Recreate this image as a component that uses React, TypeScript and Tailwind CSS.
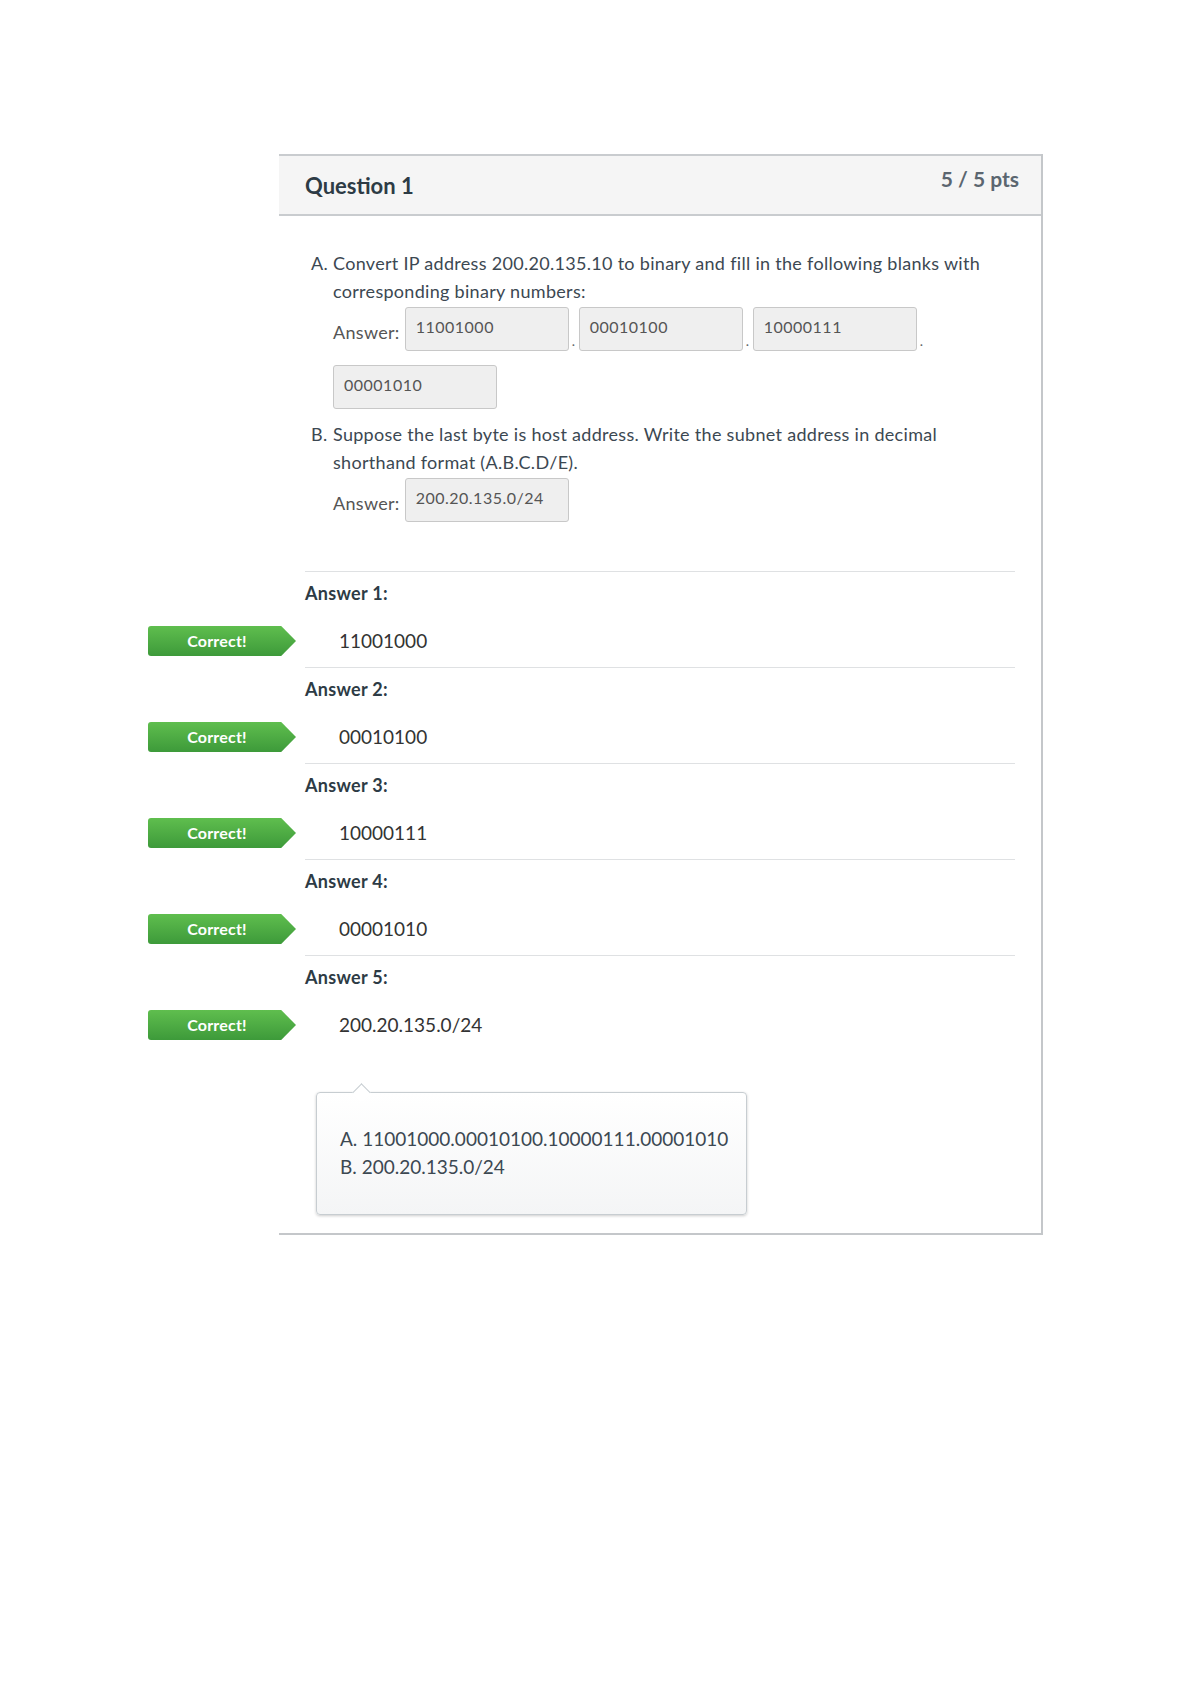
export default function App() {
  const answers = ["11001000", "00010100", "10000111", "00001010", "200.20.135.0/24"];

  return (
    <div className="min-h-[1698px] bg-white pt-[154px] pl-[279px] font-['Lato','Liberation_Sans',sans-serif] text-[#2d3b45]">
      <div className="w-[764px] border-r-2 border-b-2 border-[#c4c7ca]">
        {/* Header */}
        <div className="h-[62px] bg-[#f5f5f5] border-t-2 border-b-2 border-[#c9cccf] flex justify-between pl-[26px] pr-[22px]">
          <h2 className="text-[22px] font-bold leading-none pt-[19px] text-[#2d3b45]">Question 1</h2>
          <div className="text-[21px] font-bold leading-none pt-[12px] text-[#5b6670]">5 / 5 pts</div>
        </div>

        {/* Question text */}
        <div className="pl-[32px] pr-[20px] pt-[33px] text-[18px] leading-[28px] tracking-[0.3px] text-[#3c4852]">
          <div className="flex">
            <span className="w-[22px] shrink-0">A.</span>
            <div>
              <p>Convert IP address 200.20.135.10 to binary and fill in the following blanks with</p>
              <p>corresponding binary numbers:</p>
              <div className="flex items-center mt-[2px]">
                <span className="text-[#555] mr-[5px] mt-[6px]">Answer:</span>
                <Field value="11001000" />
                <Dot />
                <Field value="00010100" />
                <Dot />
                <Field value="10000111" />
                <Dot />
              </div>
              <div className="mt-[14px]">
                <Field value="00001010" />
              </div>
            </div>
          </div>

          <div className="flex mt-[11px]">
            <span className="w-[22px] shrink-0">B.</span>
            <div>
              <p>Suppose the last byte is host address. Write the subnet address in decimal</p>
              <p>shorthand format (A.B.C.D/E).</p>
              <div className="flex items-center mt-[2px]">
                <span className="text-[#555] mr-[5px] mt-[6px]">Answer:</span>
                <Field value="200.20.135.0/24" />
              </div>
            </div>
          </div>
        </div>

        {/* Answers */}
        <div className="px-[26px] mt-[49px]">
          {answers.map((a, i) => (
            <div key={i} className="border-t border-[#dfe1e3] pt-[10px] pb-[11px]">
              <div className="text-[18px] font-bold leading-[22px] tracking-[0.3px] text-[#2d3b45]">
                Answer {i + 1}:
              </div>
              <div className="flex items-center h-[30px] mt-[22px]">
                <div className="ml-[-157px] w-[148px] h-[30px] shrink-0 rounded-l-[3px] bg-linear-to-b from-[#5fbe4e] to-[#3d9a3a] [clip-path:polygon(0_0,90%_0,100%_50%,90%_100%,0_100%)] flex items-center justify-center pr-[10px]">
                  <span className="text-white font-bold text-[16px] leading-none tracking-[0.2px]">Correct!</span>
                </div>
                <span className="ml-[43px] text-[19px] text-[#333]">{a}</span>
              </div>
            </div>
          ))}

          {/* Tooltip */}
          <div className="relative ml-[11px] mt-[41px] mb-[18px] w-[431px] rounded-[4px] border border-[#c7cdd1] bg-linear-to-b from-white to-[#f4f5f6] shadow-[0_1px_3px_rgba(0,0,0,0.2)] pl-[23px] pt-[32px] pb-[33px] text-[19px] leading-[28px] text-[#3c4852]">
            <div className="absolute left-[38px] top-[-7px] w-[13px] h-[13px] rotate-45 bg-white border-l border-t border-[#c7cdd1]" />
            <p>A. 11001000.00010100.10000111.00001010</p>
            <p>B. 200.20.135.0/24</p>
          </div>
        </div>
      </div>
    </div>
  );
}

function Field({ value }: { value: string }) {
  return (
    <div className="w-[164px] h-[44px] shrink-0 rounded-[3px] border border-[#c8c8c8] bg-[#efefef] pl-[10px] pt-[8px] text-[16px] leading-[22px] tracking-[0.5px] text-[#555]">
      {value}
    </div>
  );
}

function Dot() {
  return <span className="w-[10px] text-center self-end text-[14px] leading-[20px] text-[#666]">.</span>;
}
